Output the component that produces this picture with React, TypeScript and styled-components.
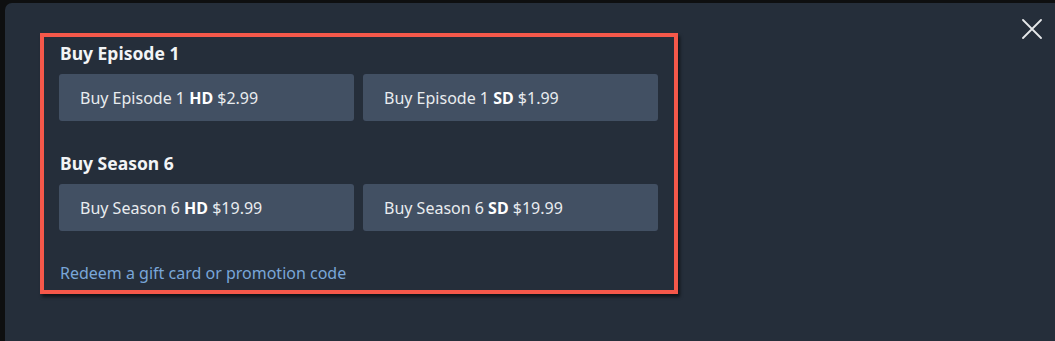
import React from "react";
import styled, { createGlobalStyle } from "styled-components";

const Global = createGlobalStyle`
  html, body { margin: 0; padding: 0; background: #0e0f10; }
  body { font-family: "Noto Sans", "Open Sans", sans-serif; }
  #root { height: 341px; }
`;

const Backdrop = styled.div`
  height: 341px;
  padding: 3px 0 0 5px;
  box-sizing: border-box;
  display: flex;
`;

const Modal = styled.div`
  flex: 1;
  position: relative;
  background: #252e3a;
  border-top-left-radius: 7px;
  padding: 30px 0 0 35px;
`;

const Highlight = styled.div`
  width: 599px;
  border: 4px solid #f5584a;
  padding: 6px 16px 7px 15px;
  box-shadow: 2px 3px 3px rgba(0, 0, 0, 0.55);
  display: flex;
  flex-direction: column;
`;

const Section = styled.section<{ $first?: boolean }>`
  margin-top: ${(p) => (p.$first ? "0" : "32px")};
`;

const Heading = styled.h3`
  margin: 0 0 11px 1px;
  font-size: 17.5px;
  line-height: 20px;
  font-weight: 700;
  color: #f2f4f6;
`;

const Options = styled.div`
  display: grid;
  grid-template-columns: 295px 295px;
  gap: 9px;
`;

const OptionButton = styled.button`
  height: 47px;
  border: none;
  border-radius: 3px;
  background: #425063;
  color: #e9ecef;
  font-family: "Noto Sans", "Open Sans", sans-serif;
  font-size: 16px;
  text-align: left;
  padding: 0 0 0 21px;
  display: flex;
  align-items: center;
  white-space: pre;
  b { font-weight: 700; color: #ffffff; }
`;

const RedeemLink = styled.a`
  margin: 32px 0 0 1px;
  font-size: 16px;
  line-height: 20px;
  color: #79a6d8;
  text-decoration: none;
`;

const CloseButton = styled.button`
  position: absolute;
  top: 12px;
  right: 9px;
  width: 28px;
  height: 28px;
  padding: 0;
  border: none;
  background: transparent;
  display: flex;
  align-items: center;
  justify-content: center;
`;

const options = [
  {
    title: "Buy Episode 1",
    items: [
      { label: "Buy Episode 1", q: "HD", price: "$2.99" },
      { label: "Buy Episode 1", q: "SD", price: "$1.99" },
    ],
  },
  {
    title: "Buy Season 6",
    items: [
      { label: "Buy Season 6", q: "HD", price: "$19.99" },
      { label: "Buy Season 6", q: "SD", price: "$19.99" },
    ],
  },
];

export default function App() {
  return (
    <>
      <Global />
      <Backdrop>
        <Modal>
          <CloseButton aria-label="Close">
            <svg width="20" height="20" viewBox="0 0 20 20">
              <path d="M1 1L19 19M19 1L1 19" stroke="#e6e8ea" strokeWidth="1.8" strokeLinecap="round" />
            </svg>
          </CloseButton>
          <Highlight>
            {options.map((s, i) => (
              <Section key={s.title} $first={i === 0}>
                <Heading>{s.title}</Heading>
                <Options>
                  {s.items.map((it) => (
                    <OptionButton key={it.q}>
                      {it.label + " "}
                      <b>{it.q}</b>
                      {" " + it.price}
                    </OptionButton>
                  ))}
                </Options>
              </Section>
            ))}
            <RedeemLink href="#">Redeem a gift card or promotion code</RedeemLink>
          </Highlight>
        </Modal>
      </Backdrop>
    </>
  );
}
